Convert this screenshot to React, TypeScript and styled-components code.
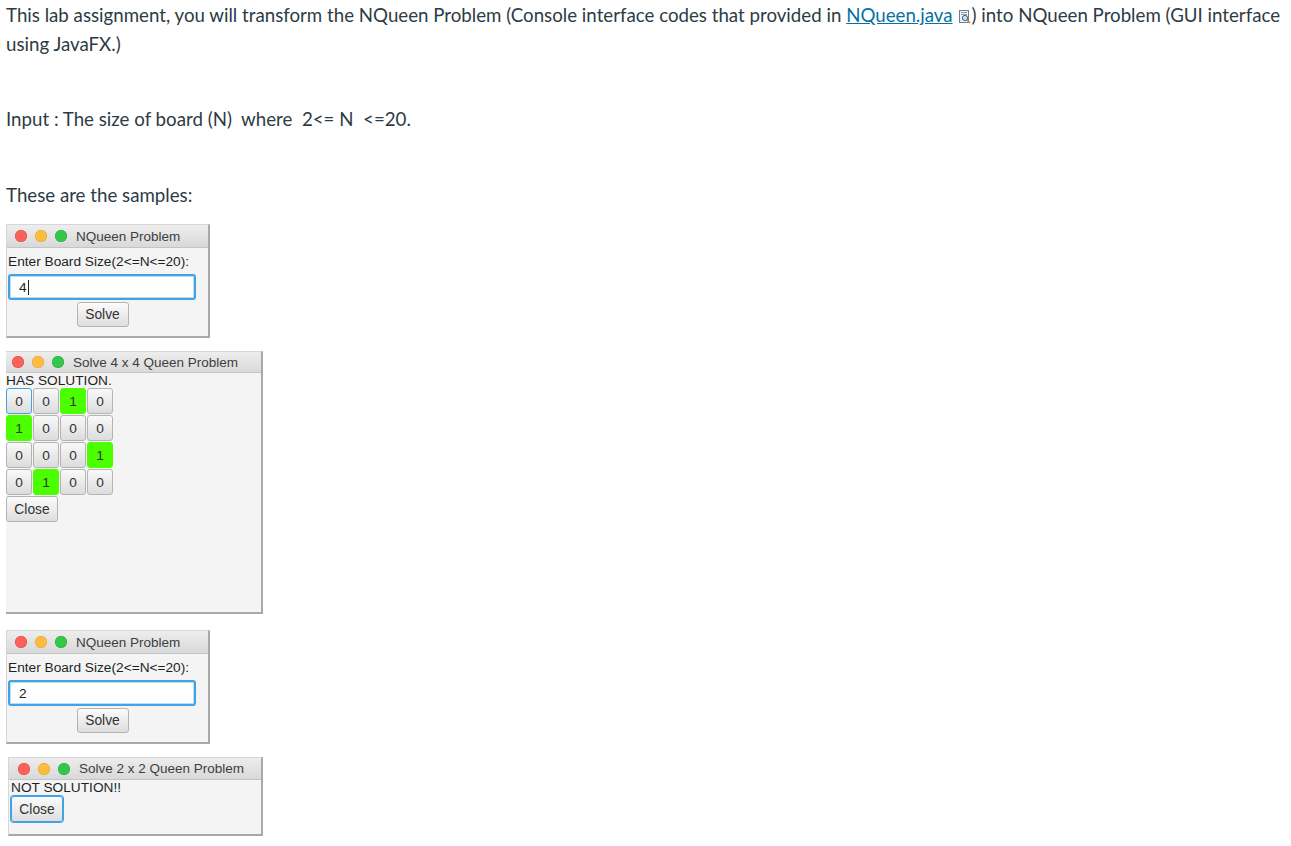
import React from "react";
import styled, { createGlobalStyle } from "styled-components";

const Global = createGlobalStyle`
  html, body { margin: 0; padding: 0; background: #ffffff; }
  body { font-family: Lato, "Noto Sans", sans-serif; color: #2d3b45; }
`;

const Page = styled.div`
  padding: 1px 0 0 6px;
  display: flex;
  flex-direction: column;
  align-items: flex-start;
`;

const Para = styled.p<{ $top?: number }>`
  margin: ${(p) => p.$top ?? 0}px 0 0 0;
  font-size: 18.7px;
  line-height: 29px;
  white-space: nowrap;
`;

const Link = styled.a`
  color: #0770a3;
  text-decoration: underline;
`;

const FileIcon = styled.svg`
  display: inline-block;
  vertical-align: -2px;
  margin: 0 1px 0 5px;
`;

const Samples = styled.div`
  margin-top: 14px;
  display: flex;
  flex-direction: column;
  align-items: flex-start;
`;

const Frame = styled.div<{ $w: number; $h: number; $top: number; $left: number; $flush?: boolean }>`
  width: ${(p) => p.$w}px;
  height: ${(p) => p.$h}px;
  margin-top: ${(p) => p.$top}px;
  margin-left: ${(p) => p.$left}px;
  background: #f4f4f4;
  box-sizing: border-box;
  border: 1px solid #d6d6d6;
  border-left: ${(p) => (p.$flush ? "0" : "1px solid #d6d6d6")};
  border-right: 2px solid #a9a9a9;
  border-bottom: 2px solid #a9a9a9;
  display: flex;
  flex-direction: column;
  overflow: hidden;
  font-family: "Liberation Sans", Arial, sans-serif;
  font-size: 13.7px;
  color: #1f1f1f;
`;

const TitleBar = styled.div<{ $h: number; $pad: number }>`
  height: ${(p) => p.$h}px;
  flex: none;
  display: flex;
  align-items: center;
  padding-left: ${(p) => p.$pad}px;
  background: linear-gradient(#ededed, #d9d9d9);
  border-bottom: 1px solid #c4c4c4;
  box-sizing: border-box;
`;

const Lights = styled.div`
  display: flex;
  gap: 8px;
  margin-right: 9px;
`;

const Light = styled.span<{ $c: string; $b: string }>`
  width: 12px;
  height: 12px;
  border-radius: 50%;
  background: ${(p) => p.$c};
  box-shadow: inset 0 0 0 0.5px ${(p) => p.$b};
`;

const Title = styled.span`
  font-size: 13.5px;
  color: #3e3e3e;
`;

const FormBody = styled.div`
  display: flex;
  flex-direction: column;
  align-items: center;
  width: 188px;
  padding: 6px 0 0 1px;
`;

const Label = styled.div<{ $lh?: number }>`
  align-self: flex-start;
  font-size: 13.7px;
  line-height: ${(p) => p.$lh ?? 16}px;
`;

const Field = styled.div`
  margin-top: 4px;
  width: 188px;
  height: 26px;
  box-sizing: border-box;
  background: #ffffff;
  border: 2px solid #3fa3e4;
  border-radius: 3px;
  box-shadow: inset 0 0 0 1px #b9ddf5;
  display: flex;
  align-items: center;
  padding-left: 9px;
  font-size: 13.7px;
  color: #222;
`;

const Caret = styled.span`
  display: inline-block;
  width: 1px;
  height: 15px;
  background: #222;
  margin-left: 1px;
`;

const Button = styled.button<{ $w: number; $h: number; $focus?: boolean }>`
  width: ${(p) => p.$w}px;
  height: ${(p) => p.$h}px;
  padding: 0;
  box-sizing: border-box;
  font-family: "Liberation Sans", Arial, sans-serif;
  font-size: 13.8px;
  color: #333;
  background: linear-gradient(#fbfbfb, #dedede);
  border: 1px solid ${(p) => (p.$focus ? "#3fa3e4" : "#b3b3b3")};
  box-shadow: ${(p) => (p.$focus ? "0 0 0 1px #3fa3e4" : "none")};
  border-radius: 3px;
  display: flex;
  align-items: center;
  justify-content: center;
`;

const SolveButton = styled(Button)`
  margin-top: 2px;
  margin-left: 1px;
`;

const ResultBody = styled.div<{ $pad: number }>`
  display: flex;
  flex-direction: column;
  align-items: flex-start;
  padding-left: ${(p) => p.$pad}px;
`;

const Board = styled.div<{ $n: number }>`
  display: grid;
  grid-template-columns: repeat(${(p) => p.$n}, 26px);
  grid-auto-rows: 26px;
  gap: 1px;
`;

const Cell = styled.div<{ $queen: boolean; $focus?: boolean }>`
  box-sizing: border-box;
  display: flex;
  align-items: center;
  justify-content: center;
  font-size: 13.7px;
  color: #333;
  border-radius: 3px;
  background: ${(p) => (p.$queen ? "#4cff00" : "linear-gradient(#f9f9f9, #dcdcdc)")};
  border: 1px solid ${(p) => (p.$queen ? "#4cff00" : p.$focus ? "#3fa3e4" : "#b4b4b4")};
`;

const CloseButton = styled(Button)<{ $mt: number }>`
  margin-top: ${(p) => p.$mt}px;
`;

const board = [
  [0, 0, 1, 0],
  [1, 0, 0, 0],
  [0, 0, 0, 1],
  [0, 1, 0, 0],
];

const Traffic: React.FC = () => (
  <Lights>
    <Light $c="#fc605b" $b="#de4842" />
    <Light $c="#fdbc40" $b="#dea236" />
    <Light $c="#34c84a" $b="#27aa35" />
  </Lights>
);

const SizeDialog: React.FC<{ value: string; caret?: boolean; top: number }> = ({ value, caret, top }) => (
  <Frame $w={204} $h={114} $top={top} $left={0}>
    <TitleBar $h={23} $pad={8}>
      <Traffic />
      <Title>NQueen Problem</Title>
    </TitleBar>
    <FormBody>
      <Label>Enter Board Size(2&lt;=N&lt;=20):</Label>
      <Field>
        {value}
        {caret && <Caret />}
      </Field>
      <SolveButton $w={52} $h={25}>Solve</SolveButton>
    </FormBody>
  </Frame>
);

export default function App() {
  return (
    <>
      <Global />
      <Page>
        <Para>
          This lab assignment, you will transform the NQueen Problem (Console interface codes that provided in{" "}
          <Link href="#">NQueen.java</Link>
          <FileIcon width="13" height="14" viewBox="0 0 13 14">
            <rect x="1.5" y="0.5" width="9" height="12" fill="#eef3f8" stroke="#6d7f93" />
            <rect x="3" y="2" width="6" height="1" fill="#8aa0b6" />
            <rect x="3" y="4" width="6" height="1" fill="#8aa0b6" />
            <circle cx="7" cy="8" r="2.6" fill="#cfe3f5" stroke="#44607d" />
            <path d="M9 10 L12 13" stroke="#c98a1b" strokeWidth="1.6" />
          </FileIcon>
          ) into NQueen Problem (GUI interface
          <br />
          using JavaFX.)
        </Para>
        <Para $top={46}>Input : The size of board (N)&nbsp; where&nbsp; 2&lt;= N&nbsp; &lt;=20.</Para>
        <Para $top={47}>These are the samples:</Para>
        <Samples>
          <SizeDialog value="4" caret top={0} />

          <Frame $w={257} $h={263} $top={13} $left={0} $flush>
            <TitleBar $h={21} $pad={6}>
              <Traffic />
              <Title>Solve 4 x 4 Queen Problem</Title>
            </TitleBar>
            <ResultBody $pad={0}>
              <Label $lh={15}>HAS SOLUTION.</Label>
              <Board $n={4}>
                {board.flatMap((row, r) =>
                  row.map((v, c) => (
                    <Cell key={`${r}-${c}`} $queen={v === 1} $focus={r === 0 && c === 0}>
                      {v}
                    </Cell>
                  ))
                )}
              </Board>
              <CloseButton $w={52} $h={26} $mt={1}>Close</CloseButton>
            </ResultBody>
          </Frame>

          <SizeDialog value="2" top={16} />

          <Frame $w={255} $h={79} $top={13} $left={2}>
            <TitleBar $h={22} $pad={9}>
              <Traffic />
              <Title>Solve 2 x 2 Queen Problem</Title>
            </TitleBar>
            <ResultBody $pad={2}>
              <Label $lh={15}>NOT SOLUTION!!</Label>
              <CloseButton $w={52} $h={26} $mt={1} $focus>Close</CloseButton>
            </ResultBody>
          </Frame>
        </Samples>
      </Page>
    </>
  );
}
